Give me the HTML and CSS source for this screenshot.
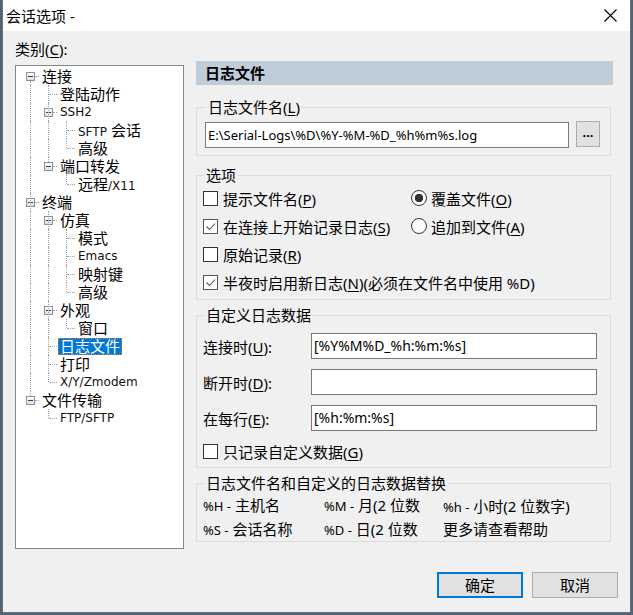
FILE: index.html
```html
<!DOCTYPE html>
<html lang="zh-CN">
<head>
<meta charset="utf-8">
<title>会话选项</title>
<link rel="stylesheet" href="styles.css">
</head>
<body>
<div class="window">
  <div class="titlebar">
    <span class="title">会话选项 -</span>
    <svg class="close" width="13" height="13" viewBox="0 0 13 13"><path d="M0.5 0.5 L12.5 12.5 M12.5 0.5 L0.5 12.5" stroke="#000" stroke-width="1.1" fill="none"/></svg>
  </div>
  <div class="main">
    <div class="left">
      <div class="cat-label">类别(<u>C</u>):</div>
      <div class="tree">
        <div class="row"><span class="c f x"></span><span class="lbl">连接</span></div>
        <div class="row"><span class="c v"></span><span class="c t"></span><span class="lbl">登陆动作</span></div>
        <div class="row"><span class="c v"></span><span class="c t x"></span><span class="lbl en">SSH2</span></div>
        <div class="row"><span class="c v"></span><span class="c v"></span><span class="c t"></span><span class="lbl"><span class="en">SFTP</span> 会话</span></div>
        <div class="row"><span class="c v"></span><span class="c v"></span><span class="c l"></span><span class="lbl">高级</span></div>
        <div class="row"><span class="c v"></span><span class="c l x"></span><span class="lbl">端口转发</span></div>
        <div class="row"><span class="c v"></span><span class="c e"></span><span class="c l"></span><span class="lbl">远程<span class="en">/X11</span></span></div>
        <div class="row"><span class="c t x"></span><span class="lbl">终端</span></div>
        <div class="row"><span class="c v"></span><span class="c t x"></span><span class="lbl">仿真</span></div>
        <div class="row"><span class="c v"></span><span class="c v"></span><span class="c t"></span><span class="lbl">模式</span></div>
        <div class="row"><span class="c v"></span><span class="c v"></span><span class="c t"></span><span class="lbl en">Emacs</span></div>
        <div class="row"><span class="c v"></span><span class="c v"></span><span class="c t"></span><span class="lbl">映射键</span></div>
        <div class="row"><span class="c v"></span><span class="c v"></span><span class="c l"></span><span class="lbl">高级</span></div>
        <div class="row"><span class="c v"></span><span class="c t x"></span><span class="lbl">外观</span></div>
        <div class="row"><span class="c v"></span><span class="c v"></span><span class="c l"></span><span class="lbl">窗口</span></div>
        <div class="row"><span class="c v"></span><span class="c t"></span><span class="lbl sel">日志文件</span></div>
        <div class="row"><span class="c v"></span><span class="c t"></span><span class="lbl">打印</span></div>
        <div class="row"><span class="c v"></span><span class="c l"></span><span class="lbl en">X/Y/Zmodem</span></div>
        <div class="row"><span class="c l x"></span><span class="lbl">文件传输</span></div>
        <div class="row"><span class="c e"></span><span class="c l"></span><span class="lbl en">FTP/SFTP</span></div>
      </div>
    </div>
    <div class="right">
      <div class="header">日志文件</div>

      <fieldset class="grp g1">
        <legend>日志文件名(<u>L</u>)</legend>
        <div class="file-row">
          <div class="input file">E:\Serial-Logs\%D\%Y-%M-%D_%h%m%s.log</div>
          <div class="browse">...</div>
        </div>
      </fieldset>

      <fieldset class="grp g2">
        <legend>选项</legend>
        <div class="opts">
          <div class="opt"><span class="cb"></span><span>提示文件名(<u>P</u>)</span></div>
          <div class="opt"><span class="rb on"></span><span>覆盖文件(<u>O</u>)</span></div>
          <div class="opt"><span class="cb on"></span><span>在连接上开始记录日志(<u>S</u>)</span></div>
          <div class="opt"><span class="rb"></span><span>追加到文件(<u>A</u>)</span></div>
          <div class="opt wide"><span class="cb"></span><span>原始记录(<u>R</u>)</span></div>
          <div class="opt wide"><span class="cb on"></span><span>半夜时启用新日志(<u>N</u>)(必须在文件名中使用 %D)</span></div>
        </div>
      </fieldset>

      <fieldset class="grp g3">
        <legend>自定义日志数据</legend>
        <div class="field"><span class="flabel">连接时(<u>U</u>):</span><div class="input data">[%Y%M%D_%h:%m:%s]</div></div>
        <div class="field"><span class="flabel">断开时(<u>D</u>):</span><div class="input data"></div></div>
        <div class="field"><span class="flabel">在每行(<u>E</u>):</span><div class="input data">[%h:%m:%s]</div></div>
        <div class="opt only"><span class="cb"></span><span>只记录自定义数据(<u>G</u>)</span></div>
      </fieldset>

      <fieldset class="grp g4">
        <legend>日志文件名和自定义的日志数据替换</legend>
        <div class="subs">
          <span><span class="en2">%H -</span> 主机名</span>
          <span><span class="en2">%M -</span> 月(2 位数</span>
          <span class="low"><span class="en2">%h -</span> 小时(2 位数字)</span>
          <span><span class="en2">%S -</span> 会话名称</span>
          <span><span class="en2">%D -</span> 日(2 位数</span>
          <span>更多请查看帮助</span>
        </div>
      </fieldset>
    </div>
  </div>
  <div class="buttons">
    <div class="btn default">确定</div>
    <div class="btn">取消</div>
  </div>
</div>
</body>
</html>
```

FILE: styles.css
```css
html, body {
  margin: 0;
  padding: 0;
}
body {
  width: 633px;
  height: 615px;
  overflow: hidden;
  background: #4f6478;
  font-family: "Noto Sans", "Noto Sans CJK SC", sans-serif;
  font-size: 15px;
  color: #000;
}
u { text-decoration: underline; text-underline-offset: 2px; }

.window {
  margin-left: 2px;
  width: 629px;
  height: 613px;
  box-sizing: border-box;
  border: 1px solid #707070;
  border-top: none;
  background: #f0f0f0;
  display: flex;
  flex-direction: column;
}

.titlebar {
  height: 31px;
  flex: none;
  background: #fff;
  display: flex;
  align-items: center;
  padding-left: 3px;
  font-size: 15px;
}
.title { line-height: 18px; }
.close { margin-left: auto; margin-right: 13px; }

.main {
  display: flex;
  padding-left: 12px;
}
.left { width: 169px; flex: none; }
.cat-label {
  margin-top: 9px;
  line-height: 18px;
  height: 18px;
}
.tree {
  margin-top: 7px;
  height: 484px;
  box-sizing: border-box;
  border: 1px solid #828790;
  background: #fff;
  padding: 1px 0 0 5px;
  font-family: "Liberation Sans", "Noto Sans CJK SC", sans-serif;
}
.row {
  display: flex;
  height: 18px;
  align-items: center;
}

/* tree connector cells */
.c {
  position: relative;
  width: 18px;
  height: 18px;
  flex: none;
}
.c::before, .c::after { content: ""; position: absolute; }
.c.v::before, .c.t::before {
  left: 9px; top: 0; height: 18px;
  border-left: 1px dotted #a0a0a0;
}
.c.l::before {
  left: 9px; top: 0; height: 9px;
  border-left: 1px dotted #a0a0a0;
}
.c.f::before {
  left: 9px; top: 9px; height: 9px;
  border-left: 1px dotted #a0a0a0;
}
.c.t::after, .c.l::after, .c.f::after {
  left: 10px; top: 9px; width: 8px;
  border-top: 1px dotted #a0a0a0;
}

/* expander box (minus) */
.c.x {
  background:
    linear-gradient(#2a3f8a, #2a3f8a) 7px 9px / 5px 1px no-repeat,
    linear-gradient(#919191, #919191) 5px 5px / 9px 1px no-repeat,
    linear-gradient(#919191, #919191) 5px 13px / 9px 1px no-repeat,
    linear-gradient(#919191, #919191) 5px 5px / 1px 9px no-repeat,
    linear-gradient(#919191, #919191) 13px 5px / 1px 9px no-repeat,
    linear-gradient(#ffffff, #dcdcdc) 5px 5px / 9px 9px no-repeat;
}
.c.x.t::after, .c.x.l::after, .c.x.f::after { left: 14px; width: 4px; }
.c.x.l::before { height: 5px; }
.c.x.f::before { top: 14px; height: 4px; }
.c.x.t::before { height: 18px; z-index: -1; }
.c.x.t { z-index: 0; }

.lbl {
  margin-left: 1px;
  padding: 0 2px;
  line-height: 17px;
  height: 17px;
  white-space: nowrap;
  font-size: 15px;
}
.en {
  font-family: "DejaVu Sans", sans-serif;
  font-size: 12px;
  color: #111;
}
.lbl .en { font-family: "DejaVu Sans", sans-serif; }
.lbl.sel {
  background: #0078d7;
  color: #fff;
  outline: 1px dotted #e07b20;
  outline-offset: -1px;
}

.right {
  margin-left: 12px;
  width: 417px;
  flex: none;
  padding-top: 30px;
}
.header {
  height: 24px;
  line-height: 24px;
  background: #bfcddb;
  padding-left: 9px;
  font-weight: bold;
  font-size: 15px;
}

.grp {
  margin: 0;
  width: 415px;
  min-width: 0;
  box-sizing: border-box;
  border: 1px solid #dcdcdc;
  padding: 0 9px 0 6px;
}
.grp legend {
  padding: 0 2px;
  margin-left: 1px;
  line-height: 18px;
  font-size: 15px;
}
.g1 { margin-top: 13px; padding: 5px 10px 7px 8px; }
.g2 { margin-top: 10px; padding-bottom: 3px; }
.g3 { margin-top: 6px; padding-top: 9px; padding-bottom: 4px; }
.g4 { margin-top: 6px; padding-bottom: 1px; }

.file-row {
  display: flex;
  align-items: flex-start;
}
.input {
  box-sizing: border-box;
  height: 26px;
  border: 1px solid #7a7a7a;
  background: #fff;
  padding-left: 2px;
  line-height: 24px;
  font-size: 14px;
  white-space: nowrap;
  overflow: hidden;
}
.input.file { width: 365px; margin-top: 1px; font-size: 13px; }
.browse {
  box-sizing: border-box;
  margin-left: 7px;
  width: 24px;
  height: 26px;
  border: 1px solid #adadad;
  background: #e1e1e1;
  text-align: center;
  line-height: 20px;
  font-weight: bold;
  font-size: 13px;
}

.opts {
  display: grid;
  grid-template-columns: 208px 1fr;
}
.opt {
  display: flex;
  align-items: center;
  height: 28px;
  white-space: nowrap;
}
.opt.wide { grid-column: 1 / 3; }
.cb {
  width: 15px;
  height: 15px;
  box-sizing: border-box;
  border: 1px solid #333;
  background: #fff;
  margin-right: 5px;
  flex: none;
}
.cb.on {
  border-color: #555;
  background: #fff url("data:image/svg+xml;utf8,<svg xmlns='http://www.w3.org/2000/svg' width='13' height='13'><path d='M2.5 6.5 L5.5 9.5 L11 3.5' fill='none' stroke='%23555' stroke-width='1.1'/></svg>") no-repeat 0 0;
}
.rb {
  width: 16px;
  height: 16px;
  box-sizing: border-box;
  border: 1px solid #333;
  border-radius: 50%;
  background: #fff;
  margin-right: 4px;
  flex: none;
}
.rb.on {
  background: radial-gradient(circle, #333 0 4px, #fff 4.5px);
}

.field {
  display: flex;
  align-items: center;
  height: 26px;
  margin-bottom: 10px;
}
.flabel { width: 108px; flex: none; }
.input.data { width: 286px; }
.opt.only { height: 24px; margin-top: -2px; }

.subs {
  display: grid;
  grid-template-columns: 121px 119px 1fr;
  grid-auto-rows: 24px;
  align-items: center;
  white-space: nowrap;
}
.subs .low { padding-top: 3px; }
.en2 { font-size: 13px; }

.buttons {
  display: flex;
  justify-content: flex-end;
  gap: 9px;
  margin-top: 23px;
  padding-right: 12px;
}
.btn {
  box-sizing: border-box;
  width: 86px;
  height: 26px;
  border: 1px solid #adadad;
  background: #e1e1e1;
  text-align: center;
  line-height: 24px;
  font-size: 15px;
}
.btn.default {
  border: 2px solid #0078d7;
  line-height: 22px;
}
```
